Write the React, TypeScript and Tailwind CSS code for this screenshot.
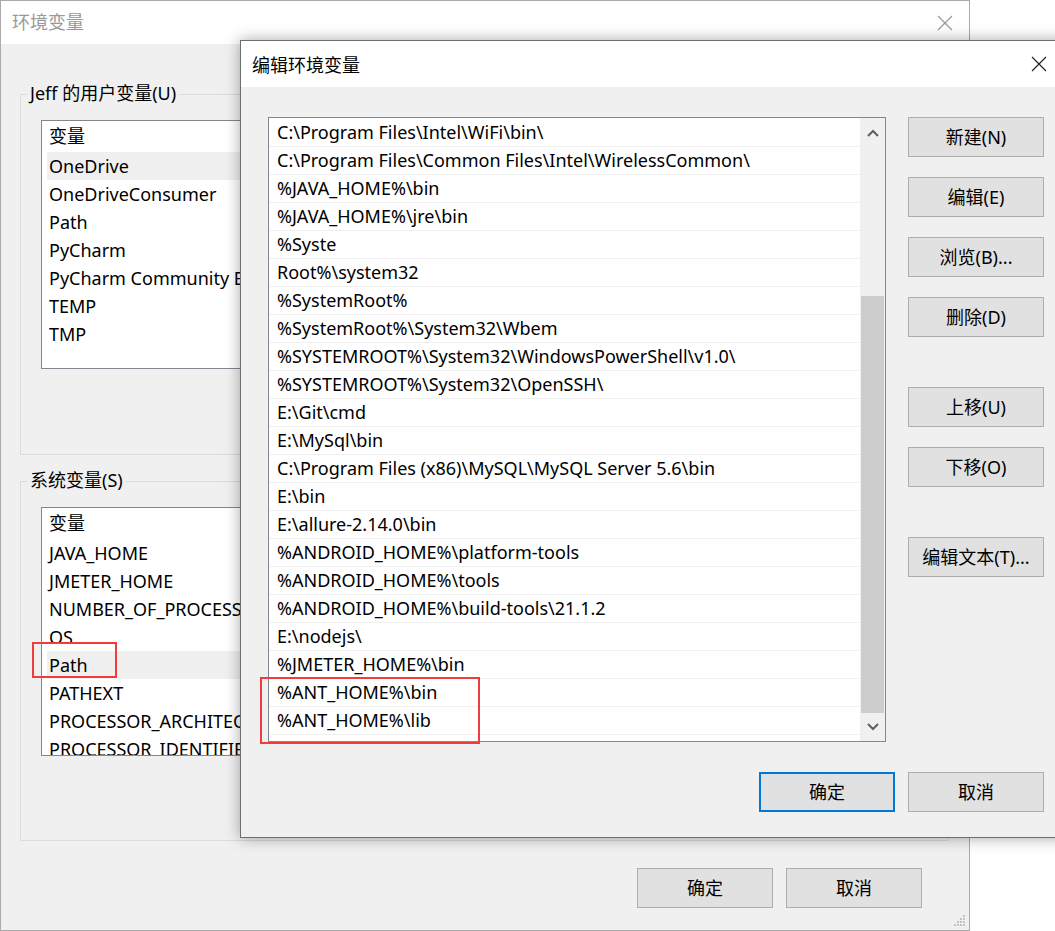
import React from 'react';

const FONT = { fontFamily: '"Noto Sans", "Noto Sans CJK SC", sans-serif' };

const userVars = ['OneDrive', 'OneDriveConsumer', 'Path', 'PyCharm', 'PyCharm Community Edition', 'TEMP', 'TMP'];
const sysVars = ['JAVA_HOME', 'JMETER_HOME', 'NUMBER_OF_PROCESSORS', 'OS', 'Path', 'PATHEXT', 'PROCESSOR_ARCHITECTURE', 'PROCESSOR_IDENTIFIER'];

const paths = [
  'C:\\Program Files\\Intel\\WiFi\\bin\\',
  'C:\\Program Files\\Common Files\\Intel\\WirelessCommon\\',
  '%JAVA_HOME%\\bin',
  '%JAVA_HOME%\\jre\\bin',
  '%Syste',
  'Root%\\system32',
  '%SystemRoot%',
  '%SystemRoot%\\System32\\Wbem',
  '%SYSTEMROOT%\\System32\\WindowsPowerShell\\v1.0\\',
  '%SYSTEMROOT%\\System32\\OpenSSH\\',
  'E:\\Git\\cmd',
  'E:\\MySql\\bin',
  'C:\\Program Files (x86)\\MySQL\\MySQL Server 5.6\\bin',
  'E:\\bin',
  'E:\\allure-2.14.0\\bin',
  '%ANDROID_HOME%\\platform-tools',
  '%ANDROID_HOME%\\tools',
  '%ANDROID_HOME%\\build-tools\\21.1.2',
  'E:\\nodejs\\',
  '%JMETER_HOME%\\bin',
  '%ANT_HOME%\\bin',
  '%ANT_HOME%\\lib',
];

const CloseX = ({ color }: { color: string }) => (
  <svg width="16" height="16" viewBox="0 0 16 16">
    <path d="M1 1 L15 15 M15 1 L1 15" stroke={color} strokeWidth="1.2" fill="none" />
  </svg>
);

const WinButton = ({ label, primary = false }: { label: string; primary?: boolean }) => (
  <div
    className={
      'flex h-[40px] w-[136px] items-center justify-center bg-[#e1e1e1] text-[18px] text-black ' +
      (primary ? 'border-2 border-[#0078d7]' : 'border border-[#adadad]')
    }
  >
    {label}
  </div>
);

const VarList = ({ items, selected, height }: { items: string[]; selected: number; height: number }) => (
  <div className="w-[910px] overflow-hidden border border-[#828790] bg-white" style={{ height }}>
    <div className="flex h-[31px] items-center pl-[7px] text-[18px]">变量</div>
    {items.map((v, i) => (
      <div
        key={v + i}
        className={'ml-[5px] flex h-[28px] items-center whitespace-nowrap pl-[2px] text-[18px] ' + (i === selected ? 'bg-[#f0f0f0]' : '')}
      >
        {v}
      </div>
    ))}
  </div>
);

export default function App() {
  return (
    <div className="relative h-[931px] w-[1055px] overflow-hidden bg-white text-black" style={FONT}>
      {/* background window */}
      <div className="flex h-[931px] w-[970px] flex-col border border-[#aaaaaa] bg-[#f0f0f0]">
        <div className="flex h-[43px] items-center justify-between bg-white pl-[11px] pr-[16px]">
          <span className="text-[18px] text-[#999999]">环境变量</span>
          <CloseX color="#999999" />
        </div>
        <div className="flex flex-col px-[19px] pt-[50px]">
          <div className="relative h-[361px] border border-[#dcdcdc]">
            <span className="absolute -top-[15px] left-[6px] bg-[#f0f0f0] px-[3px] text-[18px]">Jeff 的用户变量(U)</span>
            <div className="pl-[20px] pt-[25px]">
              <VarList items={userVars} selected={0} height={249} />
            </div>
          </div>
          <div className="relative mt-[26px] h-[360px] w-[929px] border border-[#dcdcdc]">
            <span className="absolute -top-[15px] left-[6px] bg-[#f0f0f0] px-[3px] text-[18px]">系统变量(S)</span>
            <div className="pl-[20px] pt-[25px]">
              <VarList items={sysVars} selected={4} height={249} />
            </div>
          </div>
          <div className="mt-[27px] flex justify-end gap-[13px] pr-[28px]">
            <WinButton label="确定" />
            <WinButton label="取消" />
          </div>
        </div>
        <div className="mt-auto mb-[3px] mr-[3px] flex justify-end">
          <svg width="12" height="12" viewBox="0 0 12 12">
            {[[9, 0], [6, 3], [9, 3], [3, 6], [6, 6], [9, 6], [0, 9], [3, 9], [6, 9], [9, 9]].map(([x, y]) => (
              <rect key={x + '-' + y} x={x} y={y} width="2" height="2" fill="#c4c4c4" />
            ))}
          </svg>
        </div>
      </div>

      {/* red highlight on Path in background */}
      <div className="absolute left-[32px] top-[642px] h-[36px] w-[85px] border-2 border-[#f03c3c]" />

      {/* edit dialog */}
      <div className="absolute left-[240px] top-[40px] flex h-[798px] w-[830px] flex-col border border-[#6e6e6e] bg-[#f0f0f0] shadow-[0_0_14px_rgba(0,0,0,0.35)]">
        <div className="flex h-[46px] items-center justify-between bg-white pl-[11px] pr-[22px]">
          <span className="mt-[2px] text-[18px]">编辑环境变量</span>
          <CloseX color="#222222" />
        </div>
        <div className="flex gap-[22px] pl-[27px] pt-[30px]">
          <div className="flex h-[625px] w-[618px] border border-[#828790] bg-white">
            <div className="flex-1 overflow-hidden pt-[1px]">
              {paths.map((p, i) => (
                <div key={i} className="flex h-[28px] items-center border-b border-[#f0f0f0] pl-[8px] text-[18px] whitespace-nowrap">
                  {p}
                </div>
              ))}
            </div>
            <div className="flex w-[25px] flex-col bg-[#f0f0f0]">
              <div className="flex h-[30px] items-center justify-center">
                <svg width="12" height="8" viewBox="0 0 12 8">
                  <path d="M1 7 L6 2 L11 7" stroke="#606060" strokeWidth="2" fill="none" />
                </svg>
              </div>
              <div className="h-[148px]" />
              <div className="mx-[1px] h-[417px] bg-[#cdcdcd]" />
              <div className="flex flex-1 items-center justify-center">
                <svg width="12" height="8" viewBox="0 0 12 8">
                  <path d="M1 1 L6 6 L11 1" stroke="#606060" strokeWidth="2" fill="none" />
                </svg>
              </div>
            </div>
          </div>
          <div className="flex flex-col">
            <WinButton label="新建(N)" />
            <div className="mt-[20px]"><WinButton label="编辑(E)" /></div>
            <div className="mt-[20px]"><WinButton label="浏览(B)..." /></div>
            <div className="mt-[20px]"><WinButton label="删除(D)" /></div>
            <div className="mt-[50px]"><WinButton label="上移(U)" /></div>
            <div className="mt-[20px]"><WinButton label="下移(O)" /></div>
            <div className="mt-[50px]"><WinButton label="编辑文本(T)..." /></div>
          </div>
        </div>
        <div className="mt-[30px] flex gap-[13px] pl-[518px]">
          <WinButton label="确定" primary />
          <WinButton label="取消" />
        </div>
      </div>

      {/* red highlight on ANT rows */}
      <div className="absolute left-[260px] top-[677px] h-[67px] w-[220px] border-2 border-[#f03c3c]" />
    </div>
  );
}
